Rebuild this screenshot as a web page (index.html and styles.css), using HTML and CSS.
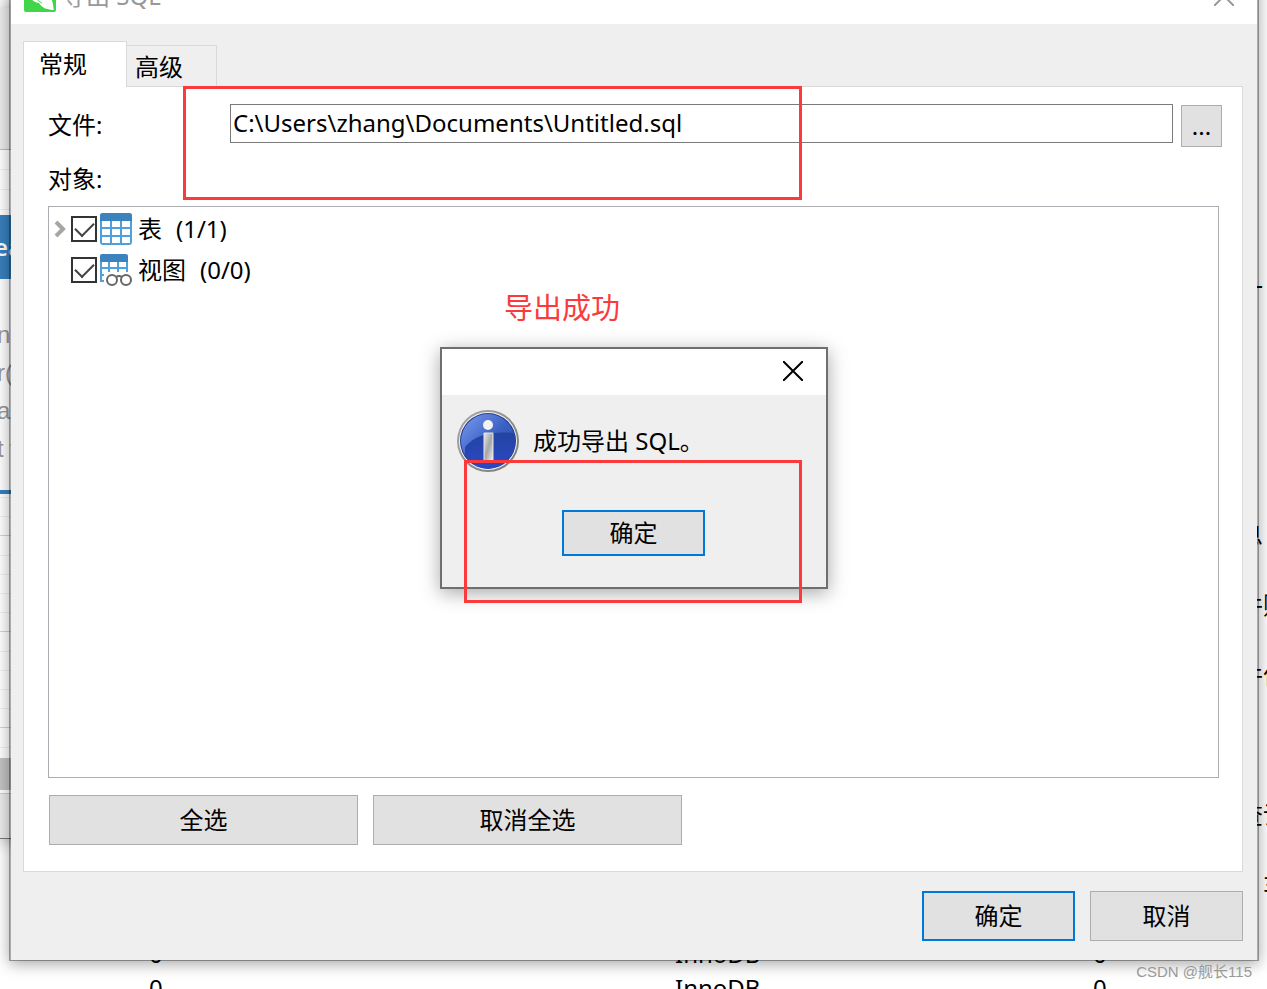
FILE: index.html
```html
<!DOCTYPE html>
<html lang="zh-CN">
<head>
    <meta charset="UTF-8">
    <meta name="viewport" content="width=device-width, initial-scale=1.0">
    <title>导出 SQL</title>
    <link rel="stylesheet" href="styles.css">
</head>
<body>

    <!-- Windows behind the dialog -->
    <div class="back-window">
        <div class="back-toolbar"></div>
        <div class="back-rows"></div>
        <div class="back-selected">ea</div>
        <ul class="back-list">
            <li>na</li>
            <li>r(</li>
            <li>a</li>
            <li>t v</li>
        </ul>
        <div class="back-rows back-rows-tall"></div>
        <div class="back-scroll"></div>
        <div class="back-status"></div>
    </div>

    <ul class="back-notes">
        <li>一</li>
        <li>息</li>
        <li>件财</li>
        <li>件件</li>
        <li></li>
        <li>查询</li>
        <li>、车</li>
    </ul>

    <table class="back-table">
        <tr><td>0</td><td>InnoDB</td><td>0</td></tr>
        <tr><td>0</td><td>InnoDB</td><td>0</td></tr>
    </table>

    <!-- Export dialog -->
    <div class="dialog">
        <div class="title-bar">
            <svg class="app-icon" viewBox="0 0 32 32" aria-hidden="true">
                <rect width="32" height="32" rx="2" fill="#41d649"/>
                <path d="M4 12C7 20 9 22 15 23C18 28 24 30 30 30C29 28 30 25 27 18C23 12 16 12 9 10L13 20C9 19 6 16 4 12Z" fill="#fff"/>
                <path d="M12 18c2 3 4 4 6 5" fill="none" stroke="#41d649" stroke-width="1"/>
            </svg>
            <span class="title">导出 SQL</span>
            <button class="close" aria-label="关闭">
                <svg viewBox="0 0 20 20"><path d="M0 0L20 20M20 0L0 20" fill="none" stroke="currentColor" stroke-width="2"/></svg>
            </button>
        </div>

        <div class="dialog-body">
            <div class="tabs">
                <button class="tab active">常规</button>
                <button class="tab">高级</button>
            </div>

            <div class="panel">
                <div class="file-row">
                    <label for="file">文件:</label>
                    <input type="text" id="file" value="C:\Users\zhang\Documents\Untitled.sql">
                    <button class="btn browse" aria-label="浏览">...</button>
                </div>
                <div class="objects-label">对象:</div>

                <ul class="tree">
                    <li>
                        <svg class="arrow" viewBox="0 0 12 18"><path d="M2 2L9 9L2 16" fill="none" stroke="#a6a6a6" stroke-width="4"/></svg>
                        <input type="checkbox" id="tables" checked>
                        <label for="tables">
                            <svg class="node-icon" viewBox="0 0 32 32">
                                <rect width="32" height="32" rx="3" fill="#4da0dc"/>
                                <path d="M0 8V3a3 3 0 0 1 3-3h26a3 3 0 0 1 3 3v5z" fill="#3c82bd"/>
                                <path d="M2 8h8v6H2zM12 8h8v6h-8zM22 8h8v6h-8zM2 16h8v6H2zM12 16h8v6h-8zM22 16h8v6h-8zM2 24h8v6H2zM12 24h8v6h-8zM22 24h8v6h-8z" fill="#fff"/>
                            </svg>
                            <span>表</span>
                            <span class="count">(1/1)</span>
                        </label>
                    </li>
                    <li>
                        <span class="arrow"></span>
                        <input type="checkbox" id="views" checked>
                        <label for="views">
                            <svg class="node-icon" viewBox="0 0 32 32">
                                <path d="M0 8h28v10H4v10H0z" fill="#4da0dc"/>
                                <path d="M0 8V2a2 2 0 0 1 2-2h24a2 2 0 0 1 2 2v6z" fill="#3c82bd"/>
                                <path d="M2 8h6v5H2zM10 8h7v5h-7zM19 8h7v5h-7zM2 15h6v5H2zM10 15h7v5h-7zM19 15h7v5h-7zM2 22h6v4H2z" fill="#fff"/>
                                <path d="M5 19h27v13H5z" fill="#fff"/>
                                <g fill="none" stroke="#666" stroke-width="2">
                                    <circle cx="12" cy="26" r="5"/>
                                    <circle cx="26" cy="26" r="5"/>
                                    <path d="M16 23q3-2 6 0"/>
                                </g>
                            </svg>
                            <span>视图</span>
                            <span class="count">(0/0)</span>
                        </label>
                    </li>
                </ul>

                <div class="select-buttons">
                    <button class="btn">全选</button>
                    <button class="btn">取消全选</button>
                </div>
            </div>

            <div class="footer">
                <button class="btn primary">确定</button>
                <button class="btn">取消</button>
            </div>
        </div>
    </div>

    <!-- Message box -->
    <div class="message-box">
        <div class="message-title">
            <button class="close" aria-label="关闭">
                <svg viewBox="0 0 20 20"><path d="M0 0L20 20M20 0L0 20" fill="none" stroke="currentColor" stroke-width="2"/></svg>
            </button>
        </div>
        <div class="message-body">
            <div class="message-text">
                <svg class="info-icon" viewBox="0 0 62 62" aria-hidden="true">
                    <defs>
                        <linearGradient id="ring" x1="0" y1="0" x2="1" y2="1">
                            <stop offset="0" stop-color="#aaa"/>
                            <stop offset="1" stop-color="#777"/>
                        </linearGradient>
                        <linearGradient id="ball" x1="0" y1="0" x2="1" y2="1">
                            <stop offset="0" stop-color="#7b9cf0"/>
                            <stop offset="0.5" stop-color="#3b61c4"/>
                            <stop offset="1" stop-color="#2340a8"/>
                        </linearGradient>
                        <linearGradient id="deep" x1="0" y1="0" x2="0" y2="1">
                            <stop offset="0" stop-color="#2344a0"/>
                            <stop offset="1" stop-color="#2b48c8"/>
                        </linearGradient>
                        <linearGradient id="stem" x1="0" y1="0" x2="1" y2="1">
                            <stop offset="0" stop-color="#e8e8e8"/>
                            <stop offset="0.5" stop-color="#a6a6a6"/>
                            <stop offset="1" stop-color="#f0f0f0"/>
                        </linearGradient>
                    </defs>
                    <circle cx="31" cy="31" r="31" fill="url(#ring)"/>
                    <circle cx="31" cy="31" r="29" fill="#f6f6f6"/>
                    <circle cx="31" cy="31" r="28" fill="#23388a"/>
                    <circle cx="31" cy="31" r="27" fill="url(#ball)"/>
                    <path d="M8 37C18 25 34 21 57 23A27 27 0 0 1 8 45Z" fill="url(#deep)"/>
                    <circle cx="31" cy="15" r="5" fill="#f2f2f2"/>
                    <path d="M27 23h9v28h-9z" fill="url(#stem)" stroke="#e6e6e6"/>
                </svg>
                <span>成功导出 SQL。</span>
            </div>
            <button class="btn primary">确定</button>
        </div>
    </div>

    <!-- Red marks -->
    <div class="mark mark-file"></div>
    <div class="mark mark-confirm"></div>
    <div class="mark-text">导出成功</div>

    <div class="watermark">CSDN @舰长115</div>

</body>
</html>
```
FILE: styles.css
```css
* {
    box-sizing: border-box;
}
body {
    margin: 0;
    height: 100vh;
    position: relative;
    overflow: hidden;
    background-color: #fff;
    color: #000;
    font-family: "Noto Sans", "Noto Sans CJK SC", sans-serif;
    font-size: 24px;
    line-height: 36px;
}
ul {
    list-style: none;
    margin: 0;
    padding: 0;
}
button,
input {
    font: inherit;
    color: inherit;
    margin: 0;
    padding: 0;
}
svg {
    display: block;
    flex: none;
}

/* windows behind the dialog */
.back-window {
    position: absolute;
    top: 8px;
    left: 0;
    width: 40px;
    border-bottom: 1px solid #777;
    box-shadow: 0 2px 16px rgba(0, 0, 0, 0.3);
}
.back-toolbar {
    height: 142px;
    background-color: #ebebeb;
    border-bottom: 1px solid #bbb;
}
.back-rows {
    height: 65px;
    background-image: repeating-linear-gradient(#fff 0 19px, #f0f0f0 19px 20px);
}
.back-selected {
    height: 64px;
    line-height: 64px;
    text-indent: -6px;
    background-color: #3880bd;
    color: #fff;
    font-weight: 600;
}
.back-list {
    height: 215px;
    padding-top: 37px;
    background-color: #fff;
    border-bottom: 4px solid #3880bd;
    color: #999;
    font-family: "Liberation Sans", sans-serif;
    line-height: 38px;
    text-indent: -3px;
}
.back-rows-tall {
    height: 264px;
    background-image: linear-gradient(#fff 0 19px, #f0f0f0 19px 20px, #fff 20px 38px, #f0f0f0 38px 39px, #fff 39px 57px, #f0f0f0 57px 58px, #fff 58px 76px, #f0f0f0 76px 77px, #fff 77px 95px, #d4d4d4 95px 96px);
    background-size: 100% 96px;
    background-position: 0 42px;
}
.back-scroll {
    height: 32px;
    background-color: #c3c3c3;
}
.back-status {
    height: 45px;
    margin-top: 3px;
    border-top: 1px solid #ccc;
    background-color: #ebebeb;
}
.back-notes {
    position: absolute;
    top: 269px;
    right: -24px;
    width: 52px;
    white-space: nowrap;
}
.back-notes li {
    height: 70px;
}
.back-notes li:first-child {
    height: 248px;
}
.back-table {
    position: absolute;
    top: 937px;
    left: 149px;
    border-spacing: 0;
    line-height: 34px;
}
.back-table td {
    padding: 0;
}
.back-table td:first-child {
    min-width: 526px;
}
.back-table td:nth-child(2) {
    min-width: 418px;
}

/* export dialog */
.dialog {
    position: absolute;
    top: -34px;
    right: 8px;
    bottom: 28px;
    left: 9px;
    display: flex;
    flex-direction: column;
    border: 2px solid rgba(0, 0, 0, 0.33);
    border-bottom-width: 1px;
    background-color: #efefef;
    background-clip: padding-box;
    box-shadow: 0 3px 14px rgba(0, 0, 0, 0.35);
}
.title-bar {
    display: flex;
    align-items: center;
    gap: 6px;
    height: 56px;
    padding: 0 23px 0 13px;
    background-color: #fff;
    color: #999;
}
.app-icon {
    width: 32px;
    height: 32px;
}
.close {
    margin-left: auto;
    border: 0;
    background: none;
}
.close svg {
    width: 20px;
    height: 20px;
}
.dialog-body {
    flex: 1;
    display: flex;
    flex-direction: column;
    padding: 17px 14px 19px 12px;
}
.tabs {
    display: flex;
    align-items: flex-end;
}
.tab {
    width: 90px;
    height: 42px;
    padding: 2px 0 0 8px;
    border: 1px solid #d9d9d9;
    border-left: 0;
    background-color: #efefef;
    text-align: left;
}
.tab.active {
    position: relative;
    z-index: 1;
    width: 104px;
    height: 46px;
    padding: 0 0 2px 15px;
    border-left: 1px solid #d9d9d9;
    border-bottom: 0;
    background-color: #fff;
}
.panel {
    flex: 1;
    display: flex;
    flex-direction: column;
    margin-top: -1px;
    padding: 17px 20px 26px 24px;
    border: 1px solid #d9d9d9;
    background-color: #fff;
}
.file-row {
    display: flex;
    align-items: flex-start;
    gap: 8px;
}
.file-row label {
    width: 174px;
    line-height: 42px;
}
.file-row input {
    flex: 1;
    height: 39px;
    padding: 0 2px 2px;
    border: 1px solid #7a7a7a;
    background-color: #fff;
}
.btn {
    height: 50px;
    border: 1px solid #adadad;
    background-color: #e1e1e1;
}
.btn.primary {
    border: 2px solid #0078d7;
}
.browse {
    width: 41px;
    height: 42px;
    margin-top: 1px;
}
.objects-label {
    margin: 14px 0 9px;
}
.tree {
    flex: 1;
    margin-right: 3px;
    padding: 1px 5px;
    border: 1px solid #abadb3;
}
.tree li {
    display: flex;
    align-items: center;
    height: 41px;
}
.arrow {
    width: 12px;
    height: 18px;
    margin-right: 5px;
}
.tree input {
    appearance: none;
    display: grid;
    justify-content: center;
    width: 26px;
    height: 26px;
    border: 2px solid #333;
    background-color: #fff;
}
.tree input:checked::after {
    content: "";
    width: 9px;
    height: 16px;
    border: solid #444;
    border-width: 0 2px 2px 0;
    transform: rotate(45deg);
}
.tree label {
    display: flex;
    align-items: center;
    gap: 6px;
    margin-left: 3px;
}
.node-icon {
    width: 32px;
    height: 32px;
}
.count {
    margin-left: 8px;
}
.select-buttons {
    display: flex;
    gap: 15px;
    margin: 17px 0 0 1px;
}
.select-buttons .btn {
    width: 309px;
}
.footer {
    display: flex;
    justify-content: flex-end;
    gap: 15px;
    margin-top: 19px;
}
.footer .btn {
    width: 153px;
}

/* message box */
.message-box {
    position: absolute;
    top: 347px;
    left: 440px;
    width: 388px;
    border: 2px solid #6f6f6f;
    background-color: #efefef;
    box-shadow: 0 4px 18px rgba(0, 0, 0, 0.35);
}
.message-title {
    display: flex;
    align-items: center;
    height: 46px;
    padding: 0 23px 2px 0;
    background-color: #fff;
}
.message-body {
    display: flex;
    flex-direction: column;
    align-items: center;
    gap: 38px;
    padding: 15px 16px 31px 15px;
}
.message-text {
    display: flex;
    align-items: center;
    align-self: stretch;
    gap: 14px;
}
.info-icon {
    width: 62px;
    height: 62px;
}
.message-body .btn {
    width: 143px;
    height: 46px;
}

/* red marks */
.mark {
    position: absolute;
    border: 3px solid #fb3b3b;
    pointer-events: none;
}
.mark-file {
    top: 86px;
    left: 183px;
    width: 619px;
    height: 114px;
}
.mark-confirm {
    top: 460px;
    left: 464px;
    width: 338px;
    height: 143px;
}
.mark-text {
    position: absolute;
    top: 290px;
    left: 504px;
    color: #fb3b3b;
    font-size: 29px;
}
.watermark {
    position: absolute;
    right: 15px;
    bottom: 5px;
    color: #999;
    font-family: "Liberation Sans", "Noto Sans CJK SC", sans-serif;
    font-size: 15px;
    line-height: 24px;
}
```
